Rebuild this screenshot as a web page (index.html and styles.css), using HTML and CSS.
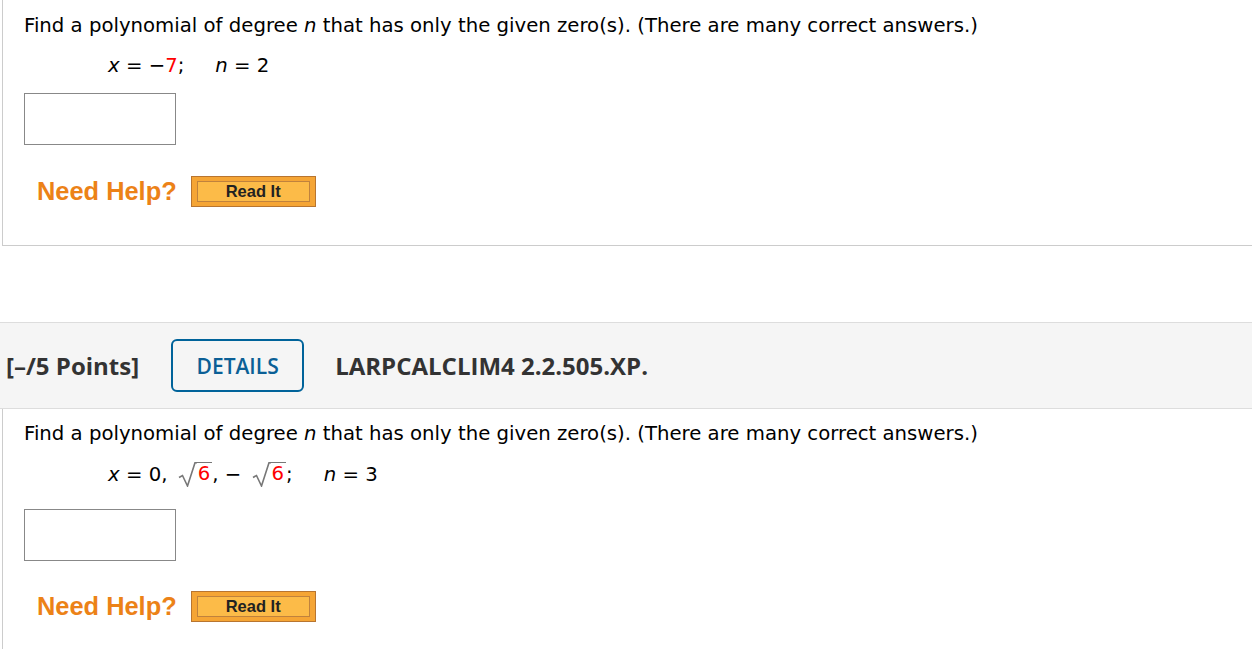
FILE: index.html
```html
<!DOCTYPE html>
<html lang="en">
<head>
    <meta charset="UTF-8">
    <title>Questions</title>
    <link rel="stylesheet" href="styles.css">
</head>
<body>

<div class="question first">
    <p class="prompt">Find a polynomial of degree <i>n</i> that has only the given zero(s). (There are many correct answers.)</p>
    <p class="math"><i>x</i> = &minus;<span class="red">7</span>;<span class="sp"></span><i>n</i> = 2</p>
    <div class="answer"></div>
    <div class="help">
        <span class="need">Need Help?</span>
        <span class="readit"><span>Read It</span></span>
    </div>
</div>

<div class="qhead">
    <span class="points">[&ndash;/5 Points]</span>
    <span class="details">DETAILS</span>
    <span class="code">LARPCALCLIM4 2.2.505.XP.</span>
</div>

<div class="question second">
    <p class="prompt">Find a polynomial of degree <i>n</i> that has only the given zero(s). (There are many correct answers.)</p>
    <p class="math tall"><i>x</i> = 0, <span class="sqrt"><svg width="19" height="25" viewBox="0 0 19 25"><path d="M1 15.5 L4.5 13.5 L9.5 24 L17 0.75 L19 0.75" fill="none" stroke="#777" stroke-width="1.6"/></svg><span class="root red">6</span></span>, &minus; <span class="sqrt"><svg width="19" height="25" viewBox="0 0 19 25"><path d="M1 15.5 L4.5 13.5 L9.5 24 L17 0.75 L19 0.75" fill="none" stroke="#777" stroke-width="1.6"/></svg><span class="root red">6</span></span>;<span class="sp"></span><i>n</i> = 3</p>
    <div class="answer"></div>
    <div class="help">
        <span class="need">Need Help?</span>
        <span class="readit"><span>Read It</span></span>
    </div>
</div>

</body>
</html>
```

FILE: styles.css
```css
body {
    margin: 0;
    font-family: "DejaVu Sans", Verdana, sans-serif;
    font-size: 19.7px;
    color: #000;
    background: #fff;
}

.question {
    margin-left: 2px;
    border-left: 1px solid #ccc;
    padding: 14px 0 0 21px;
}

.question.first {
    height: 231px;
    border-bottom: 1px solid #ccc;
    margin-bottom: 76px;
}

.question.second {
    padding-top: 13px;
    height: 239px;
}

.prompt {
    margin: 0;
    line-height: 24px;
    white-space: nowrap;
}

.math {
    margin: 16px 0 0 84px;
    line-height: 24px;
    height: 24px;
}

.math.tall {
    margin-bottom: 23px;
}

.sp {
    display: inline-block;
    width: 31px;
}

.red {
    color: #f00;
}

.sqrt {
    display: inline-flex;
    align-items: flex-start;
    vertical-align: -6px;
    margin-left: 4px;
}

.root {
    border-top: 1.5px solid #777;
    line-height: 22px;
    padding: 0 2px 0 1px;
}

.answer {
    width: 150px;
    height: 50px;
    border: 1px solid #888;
    margin-top: 15px;
}

.math.tall + .answer {
    margin-top: 0;
}

.help {
    display: flex;
    align-items: center;
    margin: 30px 0 0 13px;
}

.first .help {
    margin-top: 31px;
}

.need {
    font-family: "Liberation Sans", Arial, sans-serif;
    font-weight: bold;
    font-size: 25.4px;
    color: #ec8217;
    margin-right: 14px;
}

.readit {
    width: 123px;
    height: 29px;
    border: 1px solid #b87530;
    background: #f5a535;
    display: flex;
    align-items: center;
    justify-content: center;
}

.readit span {
    width: 111px;
    height: 19px;
    border: 1px solid #c0823d;
    background: #fcbb48;
    font-family: "Liberation Sans", Arial, sans-serif;
    font-weight: bold;
    font-size: 16.5px;
    color: #222;
    text-align: center;
    line-height: 19px;
}

.qhead {
    height: 85px;
    background: #f5f5f5;
    border-top: 1px solid #ddd;
    border-bottom: 1px solid #ddd;
    display: flex;
    align-items: center;
    padding-left: 6px;
    font-family: "Open Sans", sans-serif;
    color: #333;
}

.points {
    font-weight: bold;
    font-size: 24px;
}

.details {
    margin-left: 32px;
    width: 129px;
    height: 49px;
    border: 2.5px solid #00639a;
    border-radius: 6px;
    color: #0b5f96;
    font-size: 21px;
    font-weight: 600;
    display: flex;
    align-items: center;
    justify-content: center;
}

.code {
    margin-left: 31px;
    font-weight: bold;
    font-size: 24px;
}
```
